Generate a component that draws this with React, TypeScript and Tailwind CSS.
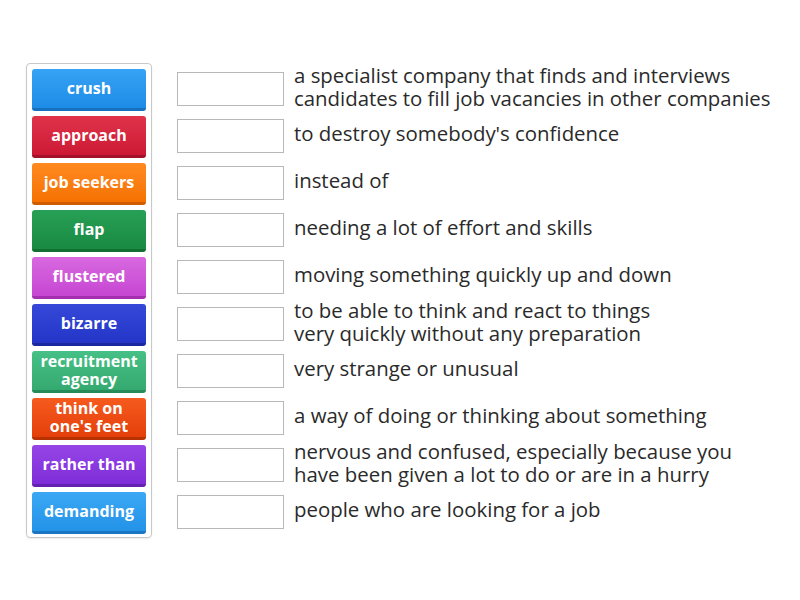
const tiles = [
  { label: "crush", cls: "bg-gradient-to-b from-[#36a3f5] to-[#1d8be6] border-[#1570c0]" },
  { label: "approach", cls: "bg-gradient-to-b from-[#e0334a] to-[#cc1834] border-[#a3102a]" },
  { label: "job seekers", cls: "bg-gradient-to-b from-[#ff8a1f] to-[#f57200] border-[#d05c00]" },
  { label: "flap", cls: "bg-gradient-to-b from-[#27a055] to-[#1a8a42] border-[#126e33]" },
  { label: "flustered", cls: "bg-gradient-to-b from-[#d868e0] to-[#c646d2] border-[#a32fb0]" },
  { label: "bizarre", cls: "bg-gradient-to-b from-[#3548d8] to-[#2435c8] border-[#1a279e]" },
  { label: "recruitment agency", cls: "bg-gradient-to-b from-[#46c086] to-[#35aa70] border-[#278a59]" },
  { label: "think on one's feet", cls: "bg-gradient-to-b from-[#f65a1e] to-[#e43f08] border-[#b83100]" },
  { label: "rather than", cls: "bg-gradient-to-b from-[#9545e6] to-[#7f2cd8] border-[#6420b0]" },
  { label: "demanding", cls: "bg-gradient-to-b from-[#3aa8f4] to-[#2393e8] border-[#1a75c2]" },
];

const definitions = [
  ["a specialist company that finds and interviews", "candidates to fill job vacancies in other companies"],
  ["to destroy somebody's confidence"],
  ["instead of"],
  ["needing a lot of effort and skills"],
  ["moving something quickly up and down"],
  ["to be able to think and react to things", "very quickly without any preparation"],
  ["very strange or unusual"],
  ["a way of doing or thinking about something"],
  ["nervous and confused, especially because you", "have been given a lot to do or are in a hurry"],
  ["people who are looking for a job"],
];

export default function App() {
  return (
    <div className="w-[800px] h-[600px] bg-white font-['Open_Sans',sans-serif]">
      <div className="flex items-start pl-[26px] pt-[63px]">
        <div className="flex flex-col gap-[5px] rounded-[4px] border border-[#c8c8c8] p-[5px] pb-[3px] shadow-[0_1px_2px_rgba(0,0,0,0.08)]">
          {tiles.map((t) => (
            <div
              key={t.label}
              className={`flex h-[42px] w-[114px] items-center justify-center rounded-[3px] border-b-[3px] px-[6px] pb-[1px] text-center text-[16px] font-bold leading-[18px] text-white ${t.cls}`}
            >
              {t.label}
            </div>
          ))}
        </div>
        <div className="ml-[25px] mt-[5px] flex flex-col gap-[5px]">
          {definitions.map((lines, i) => (
            <div key={i} className="flex h-[42px] items-center">
              <div className="h-[34px] w-[107px] shrink-0 border border-[#b8b8b8] bg-white" />
              <div className="ml-[10px] -mt-[5px] text-[20.4px] leading-[23px] text-[#2a2a2a] whitespace-nowrap">
                {lines.map((l) => (
                  <div key={l}>{l}</div>
                ))}
              </div>
            </div>
          ))}
        </div>
      </div>
    </div>
  );
}
